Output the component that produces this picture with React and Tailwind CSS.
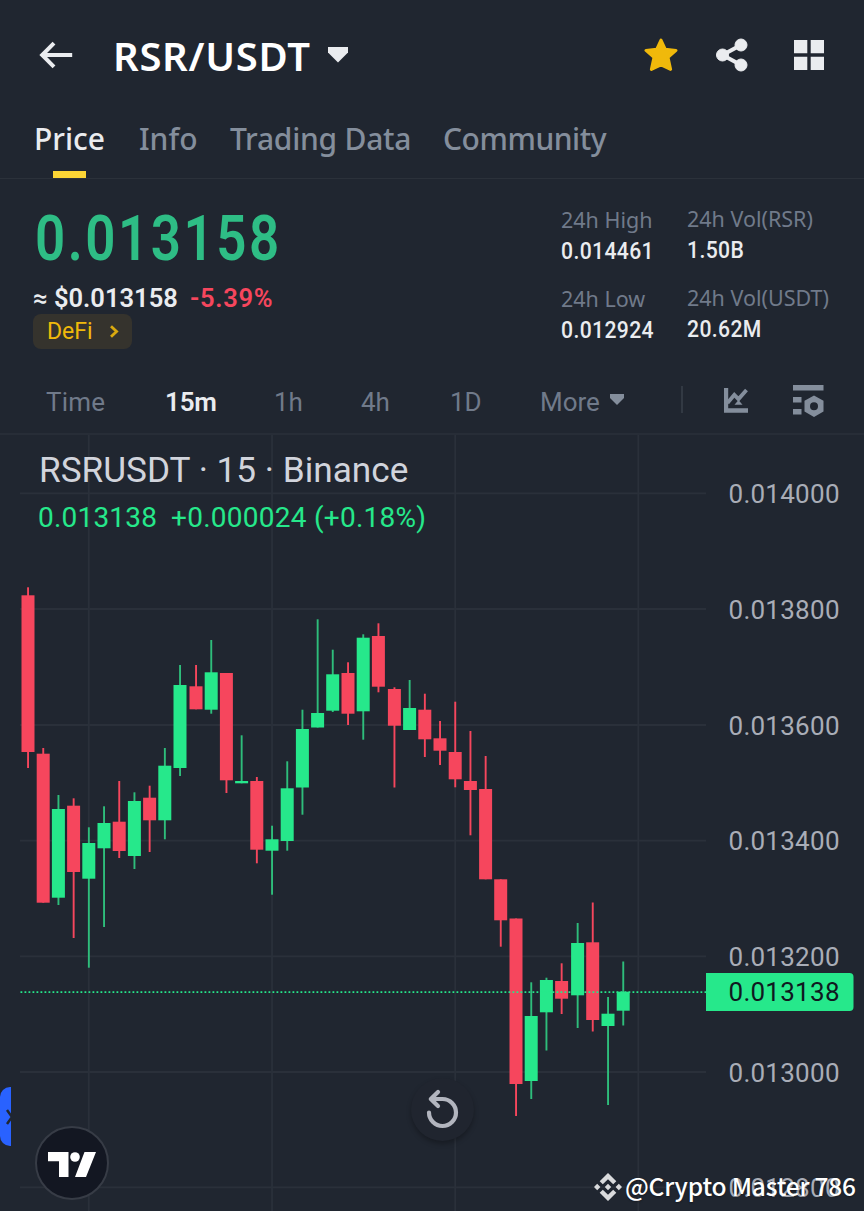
const UP = "#26E88B";
const DOWN = "#F6465D";

// x, body top, body bottom, wick top, wick bottom, rising
const candles = [
  [28, 595.3, 752, 587.3, 768, 0], [43.2, 753.7, 902.7, 748, 902.7, 0], [58.4, 809, 897.7, 795, 905, 1],
  [73.6, 805.7, 872, 798.3, 938, 0], [88.8, 843, 878.7, 827.3, 967.7, 1], [104, 823, 848.3, 806.3, 927, 1],
  [119.2, 821.7, 851, 781, 858, 0], [134.4, 801, 856, 792.3, 869, 1], [149.6, 797.7, 820.3, 785.7, 852, 0],
  [164.8, 765.7, 820.3, 748, 839.3, 1], [180, 685, 768, 665, 776, 1], [196, 686.3, 709.3, 665, 709.3, 0],
  [211.2, 672.3, 709.7, 640, 713.7, 1], [226.4, 673, 780.3, 673, 793, 0], [241.6, 781, 783.3, 735.3, 783.3, 1],
  [256.8, 781, 849.7, 777, 863.3, 0], [272, 839.3, 850.7, 825.7, 894.7, 1], [287.2, 788.3, 841, 761.3, 850.7, 1],
  [302.4, 729, 787.5, 709.7, 814.7, 1], [317.6, 713, 727.5, 619.3, 727.5, 1], [332.7, 674.3, 710.7, 649.7, 712, 1],
  [348, 673, 713.7, 662.3, 725, 0], [363.2, 637.7, 711.3, 634.3, 739.7, 1], [378.4, 636, 686.7, 623.3, 692.3, 0],
  [394.4, 689, 725.7, 687.3, 787.5, 0], [409.6, 708, 730, 680, 730, 1], [424.8, 709.7, 739.3, 693.7, 757, 0],
  [440, 738.3, 750.7, 721, 765, 0], [455.2, 752, 779.3, 701.7, 787.3, 0], [470.4, 781, 790, 731, 835.3, 0],
  [485.6, 789, 879.3, 756, 879.3, 0], [500.7, 879.3, 920.3, 879.3, 946.7, 0], [516, 918.5, 1084, 918.5, 1116, 0],
  [531.2, 1016, 1081, 982.3, 1099, 1], [546.4, 980, 1012.3, 977.7, 1050.5, 1], [561.6, 981, 998.7, 963.3, 1014, 0],
  [577.6, 943, 995.3, 923, 1028, 1], [592.7, 942.3, 1020, 902.5, 1031.5, 0], [608, 1013.7, 1026, 997, 1105, 1],
  [623.2, 991.7, 1010.7, 961.5, 1025.5, 1],
];

const priceLines = [
  [493.3, "0.014000"], [609, "0.013800"], [725, "0.013600"], [840.6, "0.013400"],
  [956.3, "0.013200"], [1072, "0.013000"], [1187.3, "0.012800"],
];

function TopBar() {
  return (
    <header className="flex h-[110px] items-center pl-[39px] pr-10 pb-px">
      <svg width="34" height="28" viewBox="0 0 34 28" className="shrink-0" fill="none" stroke="#EAECEF" strokeWidth="4">
        <path d="M33.2 14H4M15 2.2 3.2 14 15 25.800" />
      </svg>
      <h1 className="ml-[40px] mt-[2px] w-[197px] whitespace-nowrap font-['Noto_Sans'] text-[40px] font-semibold leading-[48px] tracking-[0.7px] text-white">RSR/USDT</h1>
      <svg width="20" height="16" viewBox="0 0 20 16" className="ml-[18px]" fill="#EAECEF">
        <path d="M0 0h20v5.6L10 15.5 0 5.6z" />
      </svg>
      <div className="ml-auto flex items-center">
        <svg width="34" height="34" viewBox="0 0 34 34" fill="#F0B90B" stroke="#F0B90B" strokeWidth="3" strokeLinejoin="round">
          <path d="m17 2 4.200 9.200 10.800 1.200-8 7 2.600 12L17 27 7.400 31.400l2.600-12-8-7 10.800-1.200z" />
        </svg>
        <svg width="32" height="34" viewBox="0 0 32 34" className="ml-[38px]" fill="#EAECEF" stroke="#EAECEF">
          <circle cx="6.5" cy="17" r="6" /><circle cx="25" cy="7" r="6" /><circle cx="25" cy="27" r="6" />
          <path d="M25 7 6.5 17 25 27" fill="none" strokeWidth="4" />
        </svg>
        <svg width="30" height="30" viewBox="0 0 30 30" className="ml-[46px]" fill="#EAECEF">
          <path d="M0 0h13.3v13.3H0zM16.7 0H30v13.3H16.7zM0 16.7h13.3V30H0zM16.7 16.7H30V30H16.7z" />
        </svg>
      </div>
    </header>
  );
}

function Tabs() {
  return (
    <nav className="flex h-[69px] border-b border-[#2B313A] pl-[34px] pt-[8px] font-['Noto_Sans'] text-[30px] font-medium leading-[42px] text-[#848E9C]">
      <div className="flex w-[105px] flex-col">
        <span className="h-[53px] text-[#EAECEF]">Price</span>
        <span className="ml-[19px] h-[7px] w-[33px] bg-[#FCD535]" />
      </div>
      <span className="w-[91px]">Info</span>
      <span className="w-[213px] whitespace-nowrap tracking-[-0.25px]">Trading Data</span>
      <span className="whitespace-nowrap tracking-[-0.450px]">Community</span>
    </nav>
  );
}

function Stat({ label, value }) {
  return (
    <div className="h-[80px] whitespace-nowrap">
      <div className="-mt-px h-8 font-['Noto_Sans'] text-[21.5px] leading-[31px] text-[#707A8A]">{label}</div>
      <div className="origin-left scale-x-[0.92] font-['Roboto'] text-[23px] font-medium leading-[31px] tracking-[0.4px] text-[#EAECEF]">{value}</div>
    </div>
  );
}

function Summary() {
  return (
    <section className="flex h-[191px]">
      <div className="w-[560px] pl-[33px] pt-[24px]">
        <div className="ml-[2px] h-[72px] w-[244px] origin-left scale-x-[0.84] whitespace-nowrap font-['Roboto'] text-[63px] font-semibold leading-[72px] tracking-[3px] text-[#2EBD85]">0.013158</div>
        <div className="flex h-[39px] items-center whitespace-nowrap pt-[7px] font-['Roboto'] text-[25.5px] font-semibold leading-[32px]">
          <span className="w-[157px] text-[#EAECEF]">≈ $0.013158</span>
          <span className="tracking-[0.7px] text-[#F6465D]">-5.39%</span>
        </div>
        <div className="flex h-[35px] w-[99px] items-center rounded-[8px] bg-[#35332D] pl-[14px] font-['Roboto'] text-[23px] leading-[35px] text-[#F0B90B]">
          <span className="w-[63px]">DeFi</span>
          <svg width="9" height="13" viewBox="0 0 9 13" fill="none" stroke="#D9A90F" strokeWidth="2.8"><path d="m1 1.2 5.6 5.3L1 11.8" /></svg>
        </div>
      </div>
      <div className="w-[127px] pl-px pt-[26px]">
        <Stat label="24h High" value="0.014461" />
        <Stat label="24h Low" value="0.012924" />
      </div>
      <div className="pt-[25px]">
        <Stat label="24h Vol(RSR)" value="1.50B" />
        <Stat label="24h Vol(USDT)" value="20.62M" />
      </div>
    </section>
  );
}

function Intervals() {
  return (
    <div className="flex h-[65px] items-center border-b-2 border-[#272D37] pl-[46px] font-['Roboto'] text-[26px] leading-[32px] text-[#707A8A]">
      <span className="w-[119px] tracking-[0.2px]">Time</span>
      <span className="w-[109px] font-semibold tracking-[-0.2px] text-[#EAECEF]">15m</span>
      <span className="w-[87px]">1h</span>
      <span className="w-[89px]">4h</span>
      <span className="w-[90px]">1D</span>
      <span className="w-[70px]">More</span>
      <svg width="14" height="12" viewBox="0 0 14 12" className="-mt-1" fill="#848E9C"><path d="M0 0h14v4L7 11 0 4z" /></svg>
      <span className="-mt-1 ml-[57px] h-[27px] w-[2px] bg-[#323943]" />
      <svg width="24" height="25" viewBox="0 0 24 25" className="-mt-[3px] ml-[41px]" fill="none" stroke="#848E9C">
        <path d="M2 0v22.500h22" strokeWidth="4.400" />
        <path d="m3.5 15 6.8-8.200 4.200 4.300L22.5 2" strokeWidth="3.8" />
        <path d="M10.500 16.800 14.500 12l4 4.800z" fill="#848E9C" stroke="none" />
      </svg>
      <svg width="31" height="32" viewBox="0 0 31 32" className="-mt-[2px] ml-[45px]" fill="#848E9C">
        <path d="M0 0h30.5v5.500H0zM0 12h8.5v5.500H0zM0 24h8.5v5.500H0z" />
        <path fillRule="evenodd" d="m21 10.5 9.5 5.3v10.7L21 32l-9.5-5.5V15.8zM21 17.2a4 4 0 1 0 0 8 4 4 0 0 0 0-8z" />
      </svg>
    </div>
  );
}

function Chart() {
  return (
    <svg width="864" height="776" viewBox="0 435 864 776" className="block">
      <g stroke="#2A303A" strokeWidth="1.8">
        {priceLines.map(([y]) => <path key={y} d={`M20 ${y}H706`} />)}
        {[88.8, 272, 455.2, 638.3].map((x) => <path key={x} d={`M${x} 434V1211`} />)}
      </g>
      <g className="font-['Roboto'] text-[26px]" fill="#A9ADB7">
        {priceLines.map(([y, text]) => <text key={text} x="728.5" y={y + 9.6} textLength="111">{text}</text>)}
      </g>
      {candles.map(([x, top, bottom, high, low, up]) => (
        <g key={x}>
          <rect x={x - 0.9} y={high} width="1.9" height={low - high} fill={up ? "#2EBD7B" : DOWN} />
          <rect x={x - 6.5} y={top} width="13" height={bottom - top} fill={up ? UP : DOWN} />
        </g>
      ))}
      <path d="M20.5 992.2H706" stroke={UP} strokeWidth="1.8" strokeDasharray="1.8 2.2" />
      <path d="M706 973h143.500q4 0 4 4v30q0 4-4 4H706z" fill={UP} />
      <text x="728.500" y="1001.300" textLength="111" className="font-['Roboto'] text-[26px]" fill="#101820">0.013138</text>
    </svg>
  );
}

function ChartPanel() {
  return (
    <main className="relative h-[776px] overflow-hidden">
      <Chart />
      <div className="absolute left-[38px] top-[12px] whitespace-nowrap font-['Roboto']">
        <div className="ml-px h-[50px] text-[35.200px] leading-[46px] text-[#D1D4DC]">RSRUSDT · 15 · Binance</div>
        <div className="flex text-[28px] leading-[42px] tracking-[0.2px] text-[#26E88B]">
          <span className="w-[133px]">0.013138</span>
          <span className="tracking-[0.26px]">+0.000024 (+0.18%)</span>
        </div>
      </div>
      <div className="absolute left-0 top-[652px] flex h-[59px] w-[11px] items-center overflow-hidden rounded-l-[10px] bg-[#2962FF]">
        <svg width="11" height="18" viewBox="0 0 11 18" fill="none" stroke="#202630" strokeWidth="2.500"><path d="m7 2 5 7-5 7" /></svg>
      </div>
      <div className="absolute left-[35px] top-[691px] flex h-[74px] w-[74px] items-center justify-center rounded-full border-2 border-[#373C46] bg-[#131722]">
        <svg width="48" height="25" viewBox="0 0 48 25" className="mt-[2px]" fill="#FFFFFF">
          <path d="M0 0h20.500v25h-9.500V9.300H0zM36.500 0H48L38 25H27z" /><circle cx="27" cy="5" r="4.800" />
        </svg>
      </div>
      <div className="absolute left-[411px] top-[643px] flex h-[63px] w-[63px] items-center justify-center rounded-full bg-[#20252F] shadow-[0_3px_5px_rgba(0,0,0,0.28)]">
        <svg width="34" height="40" viewBox="0 0 34 40" className="-ml-px -mt-[2px]" fill="none" stroke="#B2B5BE" strokeWidth="4.200" strokeLinecap="round" strokeLinejoin="round">
          <path d="M4 23.500A13.500 13.500 0 1 0 17.500 10H6M13 3 5.800 10l7.200 7" />
        </svg>
      </div>
      <div className="absolute left-[594px] top-[733px] flex items-center whitespace-nowrap">
        <svg width="28" height="28" viewBox="0 0 28 28" className="mt-[2px]" fill="#D9DADC">
          <path d="m14 0 8.300 8.200-3.100 3.100L14 6.200l-5.200 5.100-3.100-3.100zM3.200 10.800 6.400 14l-3.200 3.200L0 14zM24.800 10.800 28 14l-3.200 3.200-3.200-3.200zM14 10.800l3.200 3.200-3.200 3.200-3.200-3.200zM14 28l-8.300-8.200 3.100-3.100 5.200 5.100 5.200-5.100 3.100 3.100z" />
        </svg>
        <span className="ml-[3px] font-['Noto_Sans_CJK_SC'] text-[24.500px] font-medium leading-[36px] tracking-[-0.2px] text-white [text-shadow:0_1px_2px_rgba(0,0,0,0.35)]">@Crypto Master 786</span>
      </div>
    </main>
  );
}

export default function App() {
  return (
    <div className="h-[1211px] w-[864px] overflow-hidden bg-[#202630]">
      <TopBar />
      <Tabs />
      <Summary />
      <Intervals />
      <ChartPanel />
    </div>
  );
}
